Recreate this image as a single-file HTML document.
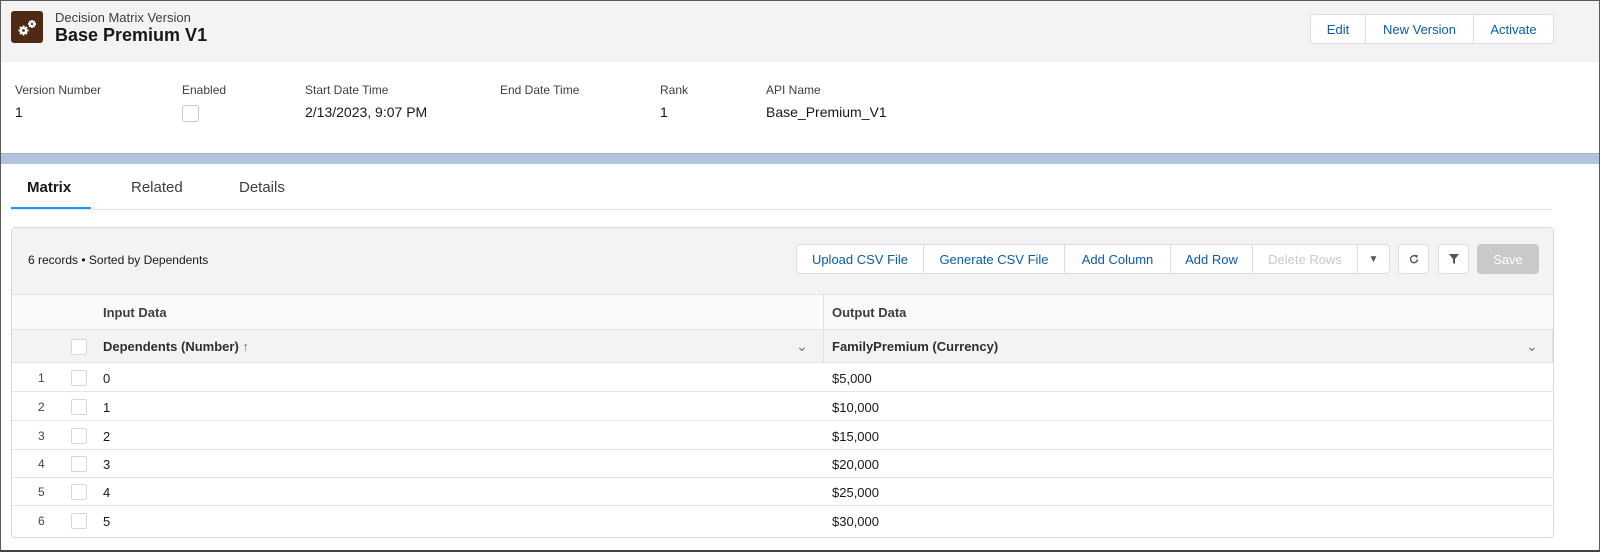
<!DOCTYPE html>
<html><head><meta charset="utf-8"><style>
*{box-sizing:border-box;margin:0;padding:0}
body{width:1600px;height:552px;overflow:hidden;font-family:"Liberation Sans",sans-serif;color:#181818;background:#fff;position:relative}
.abs{position:absolute}
.frame{position:absolute;left:0;top:0;width:1600px;height:552px;border:1px solid #5a5a5a;border-bottom:2px solid #444;pointer-events:none;z-index:10}
.lbl{font-size:12px;color:#3e3e3c}
.val{font-size:14px}
.btn{position:absolute;height:30px;border:1px solid #d8dde6;background:#fff;color:#0b5cab;font-size:13px;display:flex;align-items:center;justify-content:center}
.row{position:absolute;left:12px;width:1541px;height:29px;border-bottom:1px solid #e5e5e5;font-size:13px}
.row span{position:absolute;top:8px}
.cb{position:absolute;width:16px;height:16px;border:1px solid #d8d8d8;border-radius:2px;background:#fff}
</style></head><body>
<div class="abs" style="left:0;top:0;width:1600px;height:62px;background:#f3f3f3"></div>
<div class="abs" style="left:11px;top:11px;width:32px;height:32px;background:#4e2a14;border-radius:3px">
<svg width="32" height="32" viewBox="0 0 32 32"><g fill="#fff"><circle cx="12.5" cy="19.5" r="3.6"/><circle cx="21" cy="13" r="3"/></g><g stroke="#fff" stroke-width="2"><path d="M12.5 14.5v10M7.5 19.5h10M9 16l7 7M16 16l-7 7"/><path d="M21 9v8M17 13h8M18.2 10.2l5.6 5.6M23.8 10.2l-5.6 5.6"/></g><circle cx="12.5" cy="19.5" r="1.4" fill="#4e2a14"/><circle cx="21" cy="13" r="1.1" fill="#4e2a14"/></svg></div>
<div class="abs" style="left:55px;top:10px;font-size:13px;color:#3e3e3c">Decision Matrix Version</div>
<div class="abs" style="left:55px;top:25px;font-size:18px;font-weight:bold">Base Premium V1</div>
<div class="btn" style="left:1310px;top:14px;width:56px;border-radius:4px 0 0 4px">Edit</div>
<div class="btn" style="left:1365px;top:14px;width:109px">New Version</div>
<div class="btn" style="left:1473px;top:14px;width:81px;border-radius:0 4px 4px 0">Activate</div>

<div class="abs lbl" style="left:15px;top:83px">Version Number</div><div class="abs val" style="left:15px;top:104px">1</div>
<div class="abs lbl" style="left:182px;top:83px">Enabled</div><div class="abs" style="left:182px;top:105px;width:17px;height:17px;border:1px solid #c9c9c9;border-radius:3px"></div>
<div class="abs lbl" style="left:305px;top:83px">Start Date Time</div><div class="abs val" style="left:305px;top:104px">2/13/2023, 9:07 PM</div>
<div class="abs lbl" style="left:500px;top:83px">End Date Time</div>
<div class="abs lbl" style="left:660px;top:83px">Rank</div><div class="abs val" style="left:660px;top:104px">1</div>
<div class="abs lbl" style="left:766px;top:83px">API Name</div><div class="abs val" style="left:766px;top:104px">Base_Premium_V1</div>

<div class="abs" style="left:0;top:153px;width:1600px;height:11px;background:#b0c4df;border-top:1px solid #9fb3cf"></div>

<div class="abs" style="left:27px;top:179px;font-size:15px;font-weight:bold">Matrix</div>
<div class="abs" style="left:131px;top:179px;font-size:15px;color:#3e3e3c">Related</div>
<div class="abs" style="left:239px;top:179px;font-size:15px;color:#3e3e3c">Details</div>
<div class="abs" style="left:11px;top:209px;width:1541px;height:1px;background:#e5e5e5"></div>
<div class="abs" style="left:11px;top:207px;width:80px;height:2px;background:#1b96ff"></div>

<div class="abs" style="left:11px;top:227px;width:1543px;height:311px;border:1px solid #d8d8d8;border-radius:4px;background:#fff"></div>
<div class="abs" style="left:12px;top:228px;width:1541px;height:66px;background:#f3f3f3"></div>
<div class="abs" style="left:28px;top:253px;font-size:12px">6 records • Sorted by Dependents</div>
<div class="btn" style="left:796px;top:244px;width:128px;border-radius:4px 0 0 4px">Upload CSV File</div>
<div class="btn" style="left:923px;top:244px;width:142px">Generate CSV File</div>
<div class="btn" style="left:1064px;top:244px;width:107px">Add Column</div>
<div class="btn" style="left:1170px;top:244px;width:83px">Add Row</div>
<div class="btn" style="left:1252px;top:244px;width:106px;color:#c9c9c9">Delete Rows</div>
<div class="btn" style="left:1357px;top:244px;width:33px;border-radius:0 4px 4px 0;color:#555;font-size:10px">▼</div>
<div class="btn" style="left:1398px;top:244px;width:31px;border-radius:4px;color:#555"><svg width="12" height="12" viewBox="0 0 12 12"><path d="M9.5 6.5A3.5 3.5 0 1 1 8 3.3" fill="none" stroke="#555" stroke-width="1.4"/><path d="M6.5 1.5L10 2.5 8.5 5.5z" fill="#555"/></svg></div>
<div class="btn" style="left:1438px;top:244px;width:31px;border-radius:4px"><svg width="12" height="12" viewBox="0 0 12 12"><path d="M1 1h10L7 6v5L5 10V6z" fill="#555"/></svg></div>
<div class="btn" style="left:1477px;top:244px;width:62px;border-radius:4px;background:#c9c9c9;border-color:#c9c9c9;color:#fff">Save</div>

<div class="abs" style="left:12px;top:294px;width:1541px;height:36px;background:#fafafa;border-top:1px solid #e5e5e5;border-bottom:1px solid #e5e5e5"></div>
<div class="abs" style="left:103px;top:305px;font-size:13px;font-weight:bold;color:#3e3e3c">Input Data</div>
<div class="abs" style="left:832px;top:305px;font-size:13px;font-weight:bold;color:#3e3e3c">Output Data</div>
<div class="abs" style="left:12px;top:330px;width:1541px;height:33px;background:#f3f3f3;border-bottom:1px solid #e5e5e5"></div>
<div class="cb" style="left:71px;top:339px"></div>
<div class="abs" style="left:103px;top:339px;font-size:13px;font-weight:bold;color:#2e2e2e">Dependents (Number) <span style="font-weight:normal;color:#777">↑</span></div>
<div class="abs" style="left:832px;top:339px;font-size:13px;font-weight:bold;color:#2e2e2e">FamilyPremium (Currency)</div>
<div class="abs" style="left:796px;top:338px;font-size:14px;color:#777">⌄</div>
<div class="abs" style="left:1526px;top:338px;font-size:14px;color:#777">⌄</div>
<div class="abs" style="left:823px;top:294px;width:1px;height:69px;background:#e0e0e0"></div>
<div class="abs" style="left:1552px;top:330px;width:1px;height:33px;background:#e0e0e0"></div>

<div class="row" style="top:363px"><span style="left:26px;font-size:12px;color:#444">1</span><div class="cb" style="left:59px;top:7px"></div><span style="left:91px">0</span><span style="left:820px">$5,000</span></div>
<div class="row" style="top:392px"><span style="left:26px;font-size:12px;color:#444">2</span><div class="cb" style="left:59px;top:7px"></div><span style="left:91px">1</span><span style="left:820px">$10,000</span></div>
<div class="row" style="top:421px"><span style="left:26px;font-size:12px;color:#444">3</span><div class="cb" style="left:59px;top:7px"></div><span style="left:91px">2</span><span style="left:820px">$15,000</span></div>
<div class="row" style="top:449px"><span style="left:26px;font-size:12px;color:#444">4</span><div class="cb" style="left:59px;top:7px"></div><span style="left:91px">3</span><span style="left:820px">$20,000</span></div>
<div class="row" style="top:477px"><span style="left:26px;font-size:12px;color:#444">5</span><div class="cb" style="left:59px;top:7px"></div><span style="left:91px">4</span><span style="left:820px">$25,000</span></div>
<div class="row" style="top:506px;border-bottom:none"><span style="left:26px;font-size:12px;color:#444">6</span><div class="cb" style="left:59px;top:7px"></div><span style="left:91px">5</span><span style="left:820px">$30,000</span></div>
<div class="frame"></div>
</body></html>
